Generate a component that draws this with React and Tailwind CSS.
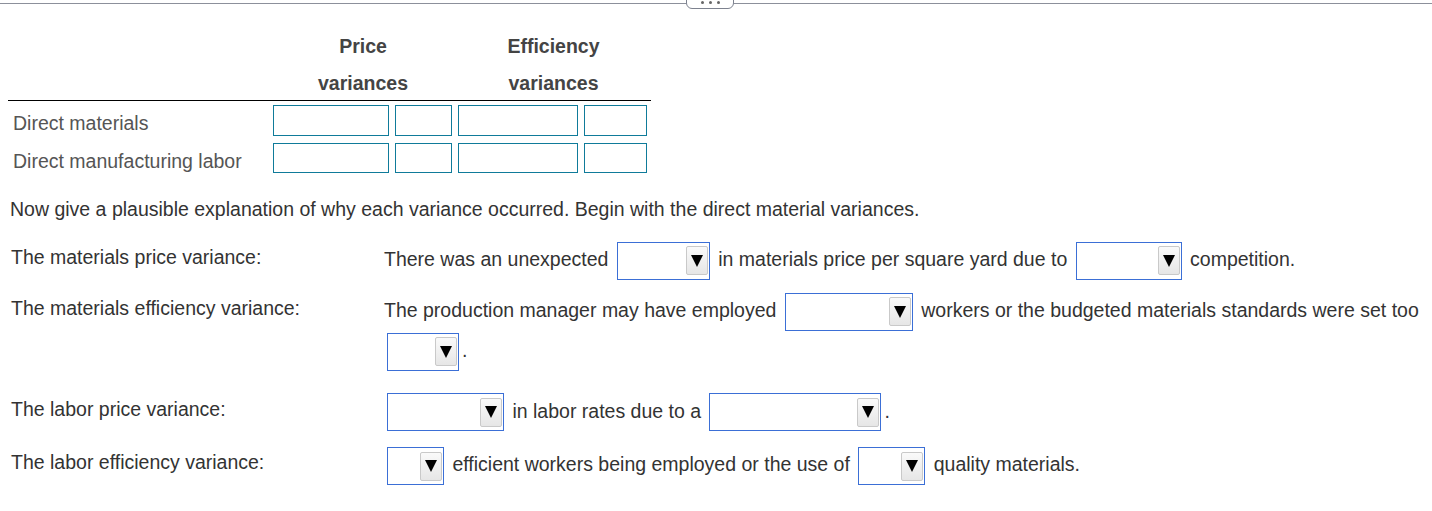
const font = { fontFamily: '"Liberation Sans", Arial, sans-serif' };

function Drop({ w }) {
  return (
    <span
      className="inline-flex items-center justify-end align-middle h-[38px] border border-[#3b6fd6] bg-white mx-[3px] pr-[1px]"
      style={{ width: w }}
    >
      <span className="flex items-center justify-center w-[22px] h-[29px] border border-[#c9c9c9] rounded-[2px] bg-gradient-to-b from-[#fafafa] to-[#e6e6e6]">
        <svg width="12" height="12" viewBox="0 0 12 12">
          <polygon points="0,0 12,0 6,12" fill="#000" />
        </svg>
      </span>
    </span>
  );
}

function Box({ w, h }) {
  return <div className="border-[1.5px] border-[#0f7b9a] bg-white" style={{ width: w, height: h }} />;
}

function Row({ label, children, className = "" }) {
  return (
    <div className={`flex ${className}`}>
      <div className="w-[384px] shrink-0 pl-[11px] leading-[38px] -mt-[2px]">{label}</div>
      <div className="flex-1 leading-[38px] pr-[6px]">{children}</div>
    </div>
  );
}

export default function App() {
  return (
    <div className="relative bg-white w-[1432px] h-[511px] text-[19.5px] text-[#333]" style={font}>
      <div className="h-[3px]" />
      <div className="h-px bg-[#8c909b]" />
      <div className="absolute left-[686px] -top-[8px] w-[48px] h-[17px] rounded-[6px] border border-[#7d828f] bg-white flex items-end justify-center gap-[5px] pb-[4px]">
        <span className="w-[3px] h-[3px] rounded-full bg-[#666]" />
        <span className="w-[3px] h-[3px] rounded-full bg-[#666]" />
        <span className="w-[3px] h-[3px] rounded-full bg-[#666]" />
      </div>

      {/* variance table */}
      <div className="ml-[8px] mt-[24px] w-[643px]">
        <div className="flex h-[73px] border-b border-black text-[#444] font-bold leading-[37px]">
          <div className="w-[265px]" />
          <div className="w-[180px] text-center">Price<br />variances</div>
          <div className="w-[6px]" />
          <div className="w-[189px] text-center">Efficiency<br />variances</div>
        </div>
        <div className="flex items-start h-[42px] text-[#555] pt-[4px]">
          <div className="w-[265px] pl-[5px] leading-[31px] pt-[3px]">Direct materials</div>
          <div className="flex gap-[6px]">
            <Box w={116} h={31} />
            <Box w={57} h={31} />
            <Box w={120} h={31} />
            <Box w={63} h={31} />
          </div>
        </div>
        <div className="flex items-start h-[31px] text-[#555]">
          <div className="w-[265px] pl-[5px] leading-[30px] pt-[3px]">Direct manufacturing labor</div>
          <div className="flex gap-[6px]">
            <Box w={116} h={30} />
            <Box w={57} h={30} />
            <Box w={120} h={30} />
            <Box w={63} h={30} />
          </div>
        </div>
      </div>

      <p className="pl-[10px] mt-[24px] leading-[22px]">
        Now give a plausible explanation of why each variance occurred. Begin with the direct material variances.
      </p>

      <div className="mt-[20px]">
        <Row label="The materials price variance:">
          There was an unexpected <Drop w={93} /> in materials price per square yard due to <Drop w={106} /> competition.
        </Row>
        <Row label="The materials efficiency variance:" className="mt-[11px]">
          The production manager may have employed <Drop w={128} /> workers or the budgeted materials standards were set too{" "}
          <span className="whitespace-nowrap"><Drop w={72} />.</span>
        </Row>
        <Row label="The labor price variance:" className="mt-[21px]">
          <Drop w={117} /> in labor rates due to a <Drop w={172} />.
        </Row>
        <Row label="The labor efficiency variance:" className="mt-[14px]">
          <Drop w={57} /> efficient workers being employed or the use of <Drop w={67} /> quality materials.
        </Row>
      </div>
    </div>
  );
}
